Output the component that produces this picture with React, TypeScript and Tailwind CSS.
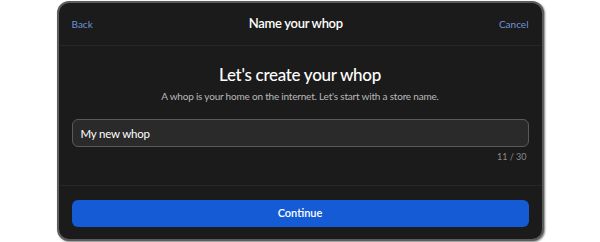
import React, { useState } from 'react';

export default function App() {
  const [name, setName] = useState('My new whop');

  return (
    <div
      className="w-[600px] h-[242px] bg-white flex items-center justify-center"
      style={{ fontFamily: 'Lato, "Noto Sans", sans-serif' }}
    >
      <div className="w-[487px] h-[240px] rounded-[12px] border-2 border-[#5c5c5c] bg-[#1b1b1b] shadow-[1px_1px_2px_rgba(0,0,0,0.5)] flex flex-col overflow-hidden">
        {/* Header */}
        <div className="h-[43px] flex items-center justify-between px-[13px] border-b border-[#262626]">
          <button className="text-[10px] text-[#6f93d8]">Back</button>
          <h2 className="text-[13px] font-semibold text-white tracking-[-0.3px]">Name your whop</h2>
          <button className="text-[10px] text-[#6f93d8]">Cancel</button>
        </div>

        {/* Body */}
        <div className="flex-1 px-[13px] pt-[17px]">
          <h1 className="text-center text-[17px] font-medium text-white leading-[24px] tracking-[-0.3px]">
            Let's create your whop
          </h1>
          <p className="text-center text-[10px] leading-[14px] text-[#b9b9b9] mt-[2px] tracking-[-0.2px]">
            A whop is your home on the internet. Let's start with a store name.
          </p>
          <input
            autoFocus
            value={name}
            onChange={(e) => setName(e.target.value)}
            maxLength={30}
            className="mt-[16px] w-full h-[28px] rounded-[6px] border border-[#5a5a5a] bg-[#2a2a2a] px-[8px] text-[11.5px] tracking-[-0.2px] text-white caret-white outline-none"
          />
          <div className="text-right text-[9px] text-[#8a8a8a] mt-[3px] pr-[2px]">
            {name.length} / 30
          </div>
        </div>

        {/* Footer */}
        <div className="border-t border-[#262626] px-[13px] pt-[13px] pb-[12px]">
          <button className="w-full h-[27px] rounded-[6px] bg-[#155bd5] text-white text-[11px] font-semibold">
            Continue
          </button>
        </div>
      </div>
    </div>
  );
}
